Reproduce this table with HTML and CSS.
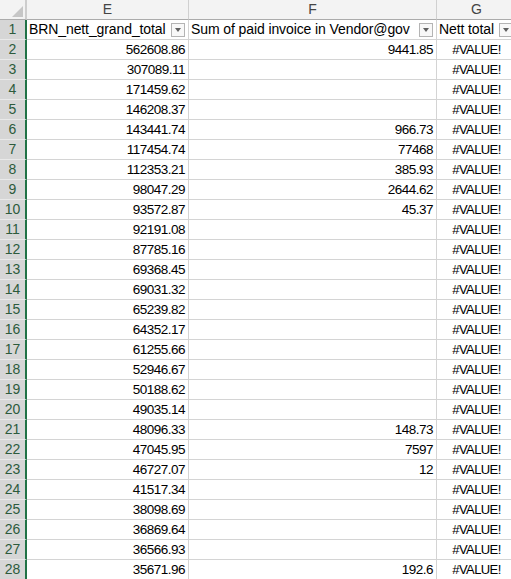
FILE: index.html
```html
<!DOCTYPE html>
<html>
<head>
<meta charset="utf-8">
<link rel="stylesheet" href="styles.css">
</head>
<body>
<div class="sheet">
  <div class="corner"><span class="tri"></span></div>
  <div class="ch">E</div>
  <div class="ch">F</div>
  <div class="ch">G</div>

  <div class="rh">1</div>
  <div class="c th"><span>BRN_nett_grand_total</span><span class="fb"><i></i></span></div>
  <div class="c th"><span>Sum of paid invoice in Vendor@gov</span><span class="fb"><i></i></span></div>
  <div class="c th"><span>Nett total</span><span class="fb"><i></i></span></div>

  <div class="rh">2</div><div class="c n">562608.86</div><div class="c n">9441.85</div><div class="c err">#VALUE!</div>
  <div class="rh">3</div><div class="c n">307089.11</div><div class="c n"></div><div class="c err">#VALUE!</div>
  <div class="rh">4</div><div class="c n">171459.62</div><div class="c n"></div><div class="c err">#VALUE!</div>
  <div class="rh">5</div><div class="c n">146208.37</div><div class="c n"></div><div class="c err">#VALUE!</div>
  <div class="rh">6</div><div class="c n">143441.74</div><div class="c n">966.73</div><div class="c err">#VALUE!</div>
  <div class="rh">7</div><div class="c n">117454.74</div><div class="c n">77468</div><div class="c err">#VALUE!</div>
  <div class="rh">8</div><div class="c n">112353.21</div><div class="c n">385.93</div><div class="c err">#VALUE!</div>
  <div class="rh">9</div><div class="c n">98047.29</div><div class="c n">2644.62</div><div class="c err">#VALUE!</div>
  <div class="rh">10</div><div class="c n">93572.87</div><div class="c n">45.37</div><div class="c err">#VALUE!</div>
  <div class="rh">11</div><div class="c n">92191.08</div><div class="c n"></div><div class="c err">#VALUE!</div>
  <div class="rh">12</div><div class="c n">87785.16</div><div class="c n"></div><div class="c err">#VALUE!</div>
  <div class="rh">13</div><div class="c n">69368.45</div><div class="c n"></div><div class="c err">#VALUE!</div>
  <div class="rh">14</div><div class="c n">69031.32</div><div class="c n"></div><div class="c err">#VALUE!</div>
  <div class="rh">15</div><div class="c n">65239.82</div><div class="c n"></div><div class="c err">#VALUE!</div>
  <div class="rh">16</div><div class="c n">64352.17</div><div class="c n"></div><div class="c err">#VALUE!</div>
  <div class="rh">17</div><div class="c n">61255.66</div><div class="c n"></div><div class="c err">#VALUE!</div>
  <div class="rh">18</div><div class="c n">52946.67</div><div class="c n"></div><div class="c err">#VALUE!</div>
  <div class="rh">19</div><div class="c n">50188.62</div><div class="c n"></div><div class="c err">#VALUE!</div>
  <div class="rh">20</div><div class="c n">49035.14</div><div class="c n"></div><div class="c err">#VALUE!</div>
  <div class="rh">21</div><div class="c n">48096.33</div><div class="c n">148.73</div><div class="c err">#VALUE!</div>
  <div class="rh">22</div><div class="c n">47045.95</div><div class="c n">7597</div><div class="c err">#VALUE!</div>
  <div class="rh">23</div><div class="c n">46727.07</div><div class="c n">12</div><div class="c err">#VALUE!</div>
  <div class="rh">24</div><div class="c n">41517.34</div><div class="c n"></div><div class="c err">#VALUE!</div>
  <div class="rh">25</div><div class="c n">38098.69</div><div class="c n"></div><div class="c err">#VALUE!</div>
  <div class="rh">26</div><div class="c n">36869.64</div><div class="c n"></div><div class="c err">#VALUE!</div>
  <div class="rh">27</div><div class="c n">36566.93</div><div class="c n"></div><div class="c err">#VALUE!</div>
  <div class="rh">28</div><div class="c n">35671.96</div><div class="c n">192.6</div><div class="c err">#VALUE!</div>
</div>
</body>
</html>
```
FILE: styles.css
```css
html, body {
  margin: 0;
  padding: 0;
  background: #ffffff;
  overflow: hidden;
}
body {
  font-family: "Liberation Sans", Arial, sans-serif;
  color: #000;
}
.sheet {
  display: grid;
  grid-template-columns: 27px 162px 248px 80px;
  grid-auto-rows: 20px;
  width: 517px;
}
.corner {
  box-sizing: border-box;
  background: #f3f3f3;
  border-right: 2px solid #cdcdcd;
  border-bottom: 1px solid #ababab;
  display: flex;
  align-items: flex-end;
  justify-content: flex-end;
  padding: 0 2px 2px 0;
}
.tri {
  width: 0;
  height: 0;
  border-left: 11px solid transparent;
  border-bottom: 11px solid #c6c6c6;
}
.ch {
  box-sizing: border-box;
  background: #f3f3f3;
  border-right: 1px solid #d0d0d0;
  border-bottom: 1px solid #ababab;
  color: #444;
  font-size: 14px;
  line-height: 19px;
  text-align: center;
}
.rh {
  box-sizing: border-box;
  background: #d6d6d6;
  border-right: 2px solid #217346;
  border-bottom: 1px solid #e9e9e9;
  color: #2d5b3c;
  font-size: 14px;
  line-height: 19px;
  text-align: center;
}
.c {
  box-sizing: border-box;
  border-right: 1px solid #d4d4d4;
  border-bottom: 1px solid #d4d4d4;
  font-size: 13.5px;
  line-height: 19px;
  padding: 0 2px;
  white-space: nowrap;
  overflow: hidden;
}
.th {
  display: flex;
  align-items: center;
  gap: 4px;
  font-size: 14px;
  letter-spacing: -0.1px;
  padding: 0 3px 0 2px;
}
.fb {
  flex: none;
  margin-left: auto;
  width: 14px;
  height: 14px;
  box-sizing: border-box;
  border: 1px solid #b4b4b4;
  background: #f8f8f8;
  display: flex;
  align-items: center;
  justify-content: center;
}
.fb i {
  width: 0;
  height: 0;
  border-left: 3.5px solid transparent;
  border-right: 3.5px solid transparent;
  border-top: 4px solid #606060;
}
.n {
  text-align: right;
  letter-spacing: -0.5px;
  padding-right: 3px;
}
.err {
  text-align: center;
  font-size: 13px;
  letter-spacing: -0.6px;
}
```
